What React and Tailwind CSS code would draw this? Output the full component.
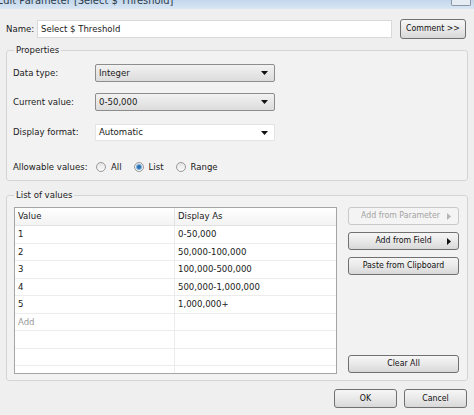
import React from "react";

const font = { fontFamily: '"DejaVu Sans Condensed", "Liberation Sans", sans-serif' };

const btn =
  "flex items-center justify-center rounded-[3px] border border-[#707070] bg-gradient-to-b from-[#f6f6f6] via-[#e9e9e9] to-[#d8d8d8] text-[8.7px] text-[#111]";

function Arrow({ className = "" }) {
  return (
    <svg width="7" height="4" viewBox="0 0 7 4" className={className}>
      <path d="M0 0h7L3.5 4z" fill="currentColor" />
    </svg>
  );
}

function Select({ value, plain }) {
  return (
    <div
      className={
        plain
          ? "flex h-[17px] w-[180px] items-center justify-between border border-[#e4e4e4] bg-white pl-[3px] pr-[6px]"
          : "flex h-[18px] w-[180px] items-center justify-between rounded-[2px] border border-[#8d8d8d] bg-gradient-to-b from-[#f2f2f2] to-[#dcdcdc] pl-[3px] pr-[6px]"
      }
    >
      <span>{value}</span>
      <Arrow className="text-[#111]" />
    </div>
  );
}

function Radio({ label, checked }) {
  return (
    <div className="flex items-center gap-[5px]">
      <span className="flex h-[10px] w-[10px] items-center justify-center rounded-full border border-[#9a9a9a] bg-gradient-to-b from-[#e4e4e4] to-[#fafafa]">
        {checked && <span className="h-[4px] w-[4px] rounded-full bg-[#2a6fb0] ring-1 ring-[#7fb0de]" />}
      </span>
      <span>{label}</span>
    </div>
  );
}

const rows = [
  ["1", "0-50,000"],
  ["2", "50,000-100,000"],
  ["3", "100,000-500,000"],
  ["4", "500,000-1,000,000"],
  ["5", "1,000,000+"],
];

export default function App() {
  return (
    <div style={font} className="h-[415px] w-[474px] overflow-hidden bg-[#efefef] text-[9.5px] text-[#1a1a1a]">
      {/* title bar, cut off at the top */}
      <div className="flex h-[9px] items-start justify-between overflow-hidden bg-gradient-to-b from-[#c3d7ec] to-[#d9e6f3]">
        <span className="-ml-[3px] -mt-[6px] text-[11px] leading-[13px] text-[#2d3b4b]">Edit Parameter [Select $ Threshold]</span>
        <span className="mr-[3px] h-[6px] w-[20px] rounded-b-[2px] border border-t-0 border-[#8c96a4] bg-[#e6ecf3]" />
      </div>

      {/* name row */}
      <div className="mt-[10px] flex items-center pl-[6px]">
        <span className="w-[31px]">Name:</span>
        <div className="flex h-[18px] w-[355px] items-center border border-[#d9d9d9] bg-white pl-[3px]">Select $ Threshold</div>
        <div className={`${btn} ml-[8px] h-[20px] w-[66px]`}>Comment &gt;&gt;</div>
      </div>

      {/* properties */}
      <fieldset className="mx-[6px] mt-[5px] h-[137px] rounded-[3px] border border-[#d5d5d5] bg-[#f2f2f2] pl-[6px]">
        <legend className="ml-[1px] px-[2px] leading-[12px]">Properties</legend>
        <div className="mt-[8px] flex items-center">
          <span className="w-[82px]">Data type:</span>
          <Select value="Integer" />
        </div>
        <div className="mt-[11px] flex items-center">
          <span className="w-[82px]">Current value:</span>
          <Select value="0-50,000" />
        </div>
        <div className="mt-[13px] flex items-center">
          <span className="w-[82px]">Display format:</span>
          <Select value="Automatic" plain />
        </div>
        <div className="mt-[18px] flex h-[16px] items-center">
          <span className="w-[83px]">Allowable values:</span>
          <div className="flex items-center gap-[12px]">
            <Radio label="All" />
            <Radio label="List" checked />
            <Radio label="Range" />
          </div>
        </div>
      </fieldset>

      {/* list of values */}
      <fieldset className="mx-[6px] mt-[8px] h-[192px] rounded-[3px] border border-[#d5d5d5] bg-[#f2f2f2] pl-[7px]">
        <legend className="px-[2px] leading-[12px]">List of values</legend>
        <div className="mt-[6px] flex">
          <div className="h-[167px] w-[323px] overflow-hidden border border-[#a5a5a5] bg-white">
            <div className="flex h-[18px] border-b border-[#e3e3e3] bg-gradient-to-b from-white to-[#f3f3f3]">
              <span className="flex w-[160px] items-center border-r border-[#e3e3e3] pl-[3px]">Value</span>
              <span className="flex items-center pl-[3px]">Display As</span>
            </div>
            {rows.map(([v, d]) => (
              <div key={v} className="flex h-[17.5px] border-b border-[#ececec]">
                <span className="flex w-[160px] items-center border-r border-[#ececec] pl-[3px]">{v}</span>
                <span className="flex items-center pl-[3px]">{d}</span>
              </div>
            ))}
            <div className="flex h-[17.5px] border-b border-[#ececec]">
              <span className="flex w-[160px] items-center border-r border-[#ececec] pl-[3px] text-[#9a9a9a]">Add</span>
            </div>
            {[0, 1, 2].map((i) => (
              <div key={i} className="flex h-[17.5px] border-b border-[#ececec]">
                <span className="w-[160px] border-r border-[#ececec]" />
              </div>
            ))}
          </div>

          <div className="ml-[11px] flex h-[167px] w-[111px] flex-col">
            <div className="relative flex h-[18px] items-center justify-center rounded-[3px] border border-[#c9c9c9] bg-[#f4f4f4] pr-[6px] text-[8.7px] text-[#a3a3a3]">
              Add from Parameter
              <svg width="4" height="7" viewBox="0 0 4 7" className="absolute right-[7px]">
                <path d="M0 0v7l4-3.5z" fill="#b5b5b5" />
              </svg>
            </div>
            <div className={`${btn} relative mt-[7px] h-[18px]`}>
              Add from Field
              <svg width="4" height="7" viewBox="0 0 4 7" className="absolute right-[7px]">
                <path d="M0 0v7l4-3.5z" fill="#111" />
              </svg>
            </div>
            <div className={`${btn} mt-[7px] h-[18px]`}>Paste from Clipboard</div>
            <div className={`${btn} mt-auto mb-[1px] h-[18px]`}>Clear All</div>
          </div>
        </div>
      </fieldset>

      {/* footer */}
      <div className="mt-[8px] flex justify-end gap-[7px] pr-[7px]">
        <div className={`${btn} h-[19px] w-[63px]`}>OK</div>
        <div className={`${btn} h-[19px] w-[63px]`}>Cancel</div>
      </div>
    </div>
  );
}
